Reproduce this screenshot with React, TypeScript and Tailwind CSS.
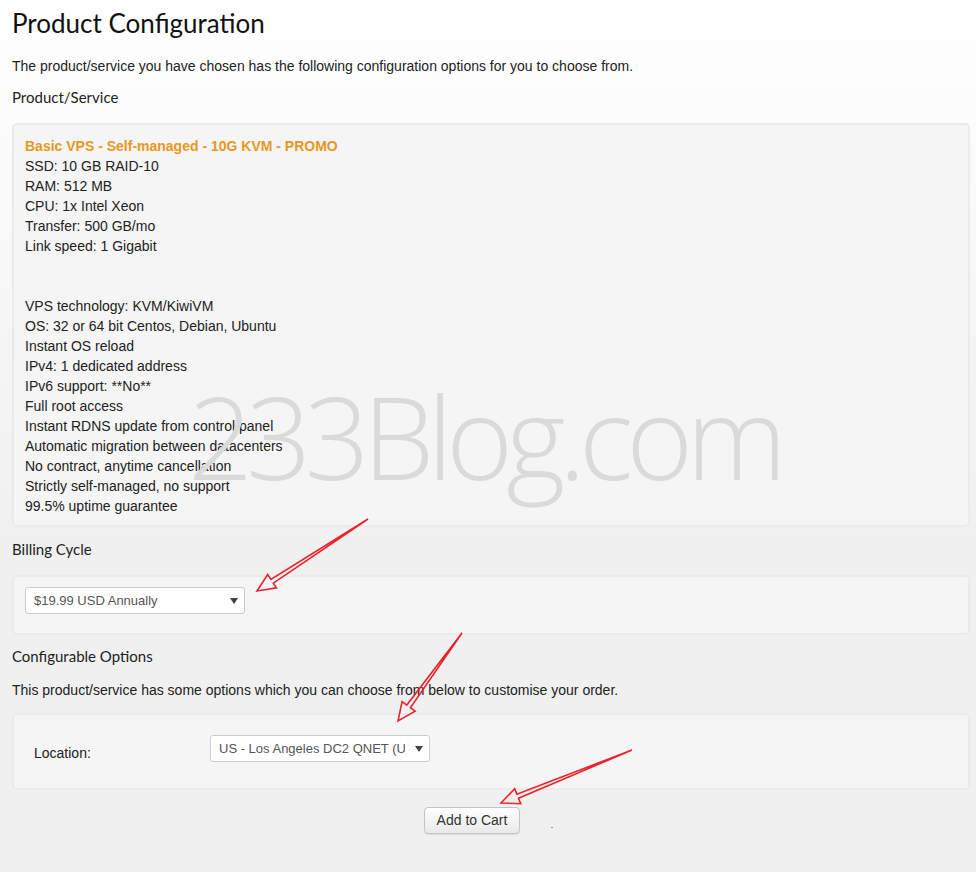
import React from "react";

type Pt = [number, number];

function arrowPoints(t: Pt, p: Pt, headLen = 18, hw = 8, w = 2.2): string {
  const dx = p[0] - t[0];
  const dy = p[1] - t[1];
  const len = Math.hypot(dx, dy);
  const ux = dx / len;
  const uy = dy / len;
  const nx = -uy;
  const ny = ux;
  const bx = p[0] - ux * headLen;
  const by = p[1] - uy * headLen;
  const pts: Pt[] = [
    t,
    [bx + nx * w, by + ny * w],
    [bx + nx * hw, by + ny * hw],
    p,
    [bx - nx * hw, by - ny * hw],
    [bx - nx * w, by - ny * w],
  ];
  return pts.map((q) => `${q[0].toFixed(1)},${q[1].toFixed(1)}`).join(" ");
}

function Select({ text }: { text: string }) {
  return (
    <div className="w-[220px] h-[27px] bg-white border border-[#cccccc] rounded-[3px] flex items-center pl-[8px] pr-[6px] text-[13px] text-[#555555] whitespace-nowrap">
      <span className="flex-1 overflow-hidden">{text}</span>
      <svg width="8" height="6" viewBox="0 0 8 6" className="shrink-0 ml-[10px]">
        <path d="M0 0 L8 0 L4 6 Z" fill="#444" />
      </svg>
    </div>
  );
}

const lines1 = [
  "SSD: 10 GB RAID-10",
  "RAM: 512 MB",
  "CPU: 1x Intel Xeon",
  "Transfer: 500 GB/mo",
  "Link speed: 1 Gigabit",
  "",
  "",
  "VPS technology: KVM/KiwiVM",
  "OS: 32 or 64 bit Centos, Debian, Ubuntu",
  "Instant OS reload",
  "IPv4: 1 dedicated address",
  "IPv6 support: **No**",
  "Full root access",
  "Instant RDNS update from control panel",
  "Automatic migration between datacenters",
  "No contract, anytime cancellation",
  "Strictly self-managed, no support",
  "99.5% uptime guarantee",
];

export default function App() {
  return (
    <div className="relative w-[976px] h-[872px] overflow-hidden bg-[linear-gradient(to_bottom,#ffffff_0px,#f0f0f0_540px,#f0f0f0_872px)] text-[#222222] font-['Liberation_Sans',Arial,sans-serif]">
      <div className="pl-[12px] pr-[6px] pt-[3px] flex flex-col">
        <h1 className="text-[26px] leading-[40px] text-[#111111] font-normal font-['Lato','Open_Sans',sans-serif]">
          Product Configuration
        </h1>
        <p className="mt-[13px] text-[14px] leading-[20px]">
          The product/service you have chosen has the following configuration options for you to choose from.
        </p>
        <h2 className="mt-[9px] text-[15px] leading-[24px] font-['Lato','Open_Sans',sans-serif]">
          Product/Service
        </h2>
        <div className="mt-[14px] border-2 border-[#ebebeb] rounded-[5px] bg-[#f5f5f5] pl-[11px] pt-[11px] pb-[9px] text-[14px] leading-[20px]">
          <div className="font-bold text-[#e6981e]">Basic VPS - Self-managed - 10G KVM - PROMO</div>
          {lines1.map((l, i) => (
            <div key={i} className="h-[20px]">
              {l}
            </div>
          ))}
        </div>
        <h2 className="mt-[10px] text-[15px] leading-[24px] font-['Lato','Open_Sans',sans-serif]">
          Billing Cycle
        </h2>
        <div className="mt-[14px] h-[60px] border-2 border-[#ebebeb] rounded-[5px] bg-[#f5f5f5] pl-[11px] pt-[10px]">
          <Select text="$19.99 USD Annually" />
        </div>
        <h2 className="mt-[9px] text-[15px] leading-[24px] font-['Lato','Open_Sans',sans-serif]">
          Configurable Options
        </h2>
        <p className="mt-[12px] text-[14px] leading-[20px]">
          This product/service has some options which you can choose from below to customise your order.
        </p>
        <div className="mt-[13px] h-[77px] border-2 border-[#ebebeb] rounded-[5px] bg-[#f5f5f5] pl-[20px] pt-[20px] flex items-start">
          <div className="w-[176px] text-[14px] leading-[20px] pt-[8px]">Location:</div>
          <Select text="US - Los Angeles DC2 QNET (USA)" />
        </div>
        <div className="mt-[17px] pl-[412px]">
          <button className="w-[96px] h-[27px] rounded-[4px] border border-[#c4c4c4] bg-[linear-gradient(to_bottom,#ffffff,#e9e9e9)] text-[14px] text-[#333333] shadow-[0_1px_1px_rgba(0,0,0,0.08)]">
            Add to Cart
          </button>
        </div>
      </div>

      {/* watermark */}
      <div className="absolute left-[188px] top-[366px] text-[114px] leading-[140px] font-light tracking-[-0.06em] text-[#dadada] whitespace-nowrap pointer-events-none font-['Open_Sans','Noto_Sans',sans-serif]">
        233Blog.com
      </div>

      {/* annotation arrows */}
      <svg className="absolute left-0 top-0 pointer-events-none" width="976" height="872">
        <polygon points={arrowPoints([368, 519], [257, 591])} fill="none" stroke="#e8232b" strokeWidth="1.6" />
        <polygon points={arrowPoints([462, 633], [398, 721])} fill="none" stroke="#e8232b" strokeWidth="1.6" />
        <polygon points={arrowPoints([632, 750], [501, 803])} fill="none" stroke="#e8232b" strokeWidth="1.6" />
        <rect x="551" y="827" width="2" height="1" fill="#999" />
      </svg>
    </div>
  );
}
